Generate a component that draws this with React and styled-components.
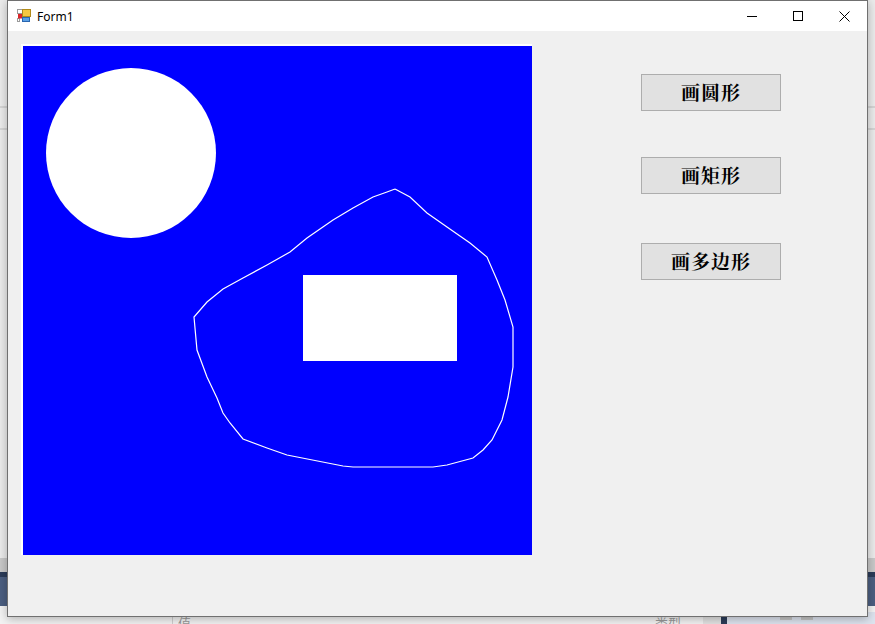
import React from 'react';
import styled, { createGlobalStyle } from 'styled-components';

const GlobalStyle = createGlobalStyle`
  html, body {
    margin: 0;
    padding: 0;
    background: #ebebeb;
  }
  body {
    font-family: "Noto Sans", "Liberation Sans", sans-serif;
  }
`;

const Desktop = styled.div`
  position: relative;
  width: 875px;
  height: 624px;
  overflow: hidden;
  background: #ebebeb;
`;

// the IDE that shows round the edges of the form window
const Backdrop = styled.div`
  height: 100%;
  display: flex;
  flex-direction: column;
`;

const Band = styled.div`
  flex: none;
  height: ${p => p.$h}px;
  margin-top: ${p => p.$gap || 0}px;
  background: ${p => p.$bg};
`;

const Filler = styled.div`
  flex: 1;
`;

const BottomBar = styled.div`
  flex: none;
  height: 18px;
  display: flex;
  align-items: flex-end;
  background: #f3f3f3;
  padding-left: 172px;
`;

const Divider = styled.div`
  width: 1px;
  height: 12px;
  background: #cfcfcf;
`;

const BackText = styled.span`
  margin-left: ${p => p.$gap}px;
  height: 10px;
  overflow: hidden;
  font-family: "Noto Sans CJK SC", sans-serif;
  font-size: 13px;
  line-height: 18px;
  color: #9a9a9a;
  white-space: nowrap;
`;

const Toolbar = styled.div`
  margin-left: 22px;
  height: 12px;
  flex: 1;
  display: flex;
  align-items: center;
  background: #dde3ee;
  border-left: 18px solid #e2e2e2;

  &::before {
    content: '';
    width: 6px;
    height: 12px;
    background: #2b3b58;
  }
`;

const ToolDash = styled.div`
  width: 12px;
  height: 3px;
  margin-left: ${p => p.$gap}px;
  background: #c4c4c4;
`;

const Window = styled.div`
  position: absolute;
  left: 7px;
  top: 0;
  z-index: 1;
  width: 861px;
  height: 617px;
  box-sizing: border-box;
  border: 1px solid #707070;
  background: #f0f0f0;
  display: flex;
  flex-direction: column;
  box-shadow: 0 2px 9px rgba(0, 0, 0, 0.28);
`;

const TitleBar = styled.div`
  height: 30px;
  flex: none;
  background: #ffffff;
  display: flex;
  align-items: center;
  padding-left: 9px;
`;

const Title = styled.span`
  margin-left: 6px;
  font-family: "Segoe UI", "Noto Sans", "Open Sans", sans-serif;
  font-size: 12px;
  color: #000;
  line-height: 1;
  padding-top: 1px;
`;

const Caption = styled.div`
  margin-left: auto;
  display: flex;
  height: 30px;
`;

const CaptionButton = styled.div`
  width: 46px;
  height: 30px;
  display: flex;
  align-items: center;
  justify-content: center;
`;

const Client = styled.div`
  flex: 1;
  display: flex;
  align-items: flex-start;
  padding: 13px 0 0 13px;
`;

const Canvas = styled.div`
  width: 509px;
  height: 509px;
  border-top: 2px solid #ffffff;
  border-left: 2px solid #ffffff;
  background: #0000ff;
  flex: none;

  svg {
    display: block;
  }
`;

const ButtonColumn = styled.div`
  display: flex;
  flex-direction: column;
  margin-left: 109px;
  padding-top: 30px;
`;

const FormButton = styled.button`
  width: 140px;
  height: 37px;
  margin-top: ${p => p.$gap || 0}px;
  padding: 0 0 3px;
  box-sizing: border-box;
  border: 1px solid #adadad;
  background: #e1e1e1;
  color: #000;
  font-family: "Noto Serif CJK SC", "Noto Sans CJK SC", serif;
  font-weight: 700;
  font-size: 19px;
  line-height: 1;
  letter-spacing: 1px;
  cursor: default;
`;

const FormIcon = () => (
  <svg width="14" height="14" viewBox="0 0 14 14">
    <rect x="0.5" y="0.5" width="5" height="4" fill="#fff" stroke="#9a9a9a" />
    <rect x="0.5" y="9.5" width="2" height="3" fill="#fff" stroke="#9a9a9a" />
    <rect x="5.5" y="0.5" width="8" height="7" fill="#f5c842" stroke="#b08a1a" />
    <rect x="1" y="5" width="4" height="4.5" fill="#d8262a" />
    <rect x="5.5" y="8.5" width="7" height="4" fill="#5aa0e6" stroke="#2a66b0" />
  </svg>
);

// freehand outline, in page pixels
const blob = [
  [395, 189], [410, 197], [427, 213], [447, 227], [470, 243], [487, 257],
  [497, 280], [505, 300], [513, 327], [513, 367], [508, 397], [502, 420],
  [492, 440], [483, 450], [473, 458], [447, 465], [433, 467], [353, 467],
  [343, 466], [287, 455], [267, 448], [243, 439], [230, 423], [223, 413],
  [217, 398], [207, 377], [197, 350], [194, 317], [207, 302], [223, 289],
  [243, 278], [267, 265], [290, 252], [307, 238], [333, 220], [353, 208],
  [373, 197], [387, 192], [395, 189],
];

function App() {
  return (
    <>
      <GlobalStyle />
      <Desktop>
        <Backdrop>
          <Band $gap={106} $h={2} $bg="#d4d4d4" />
          <Band $gap={20} $h={2} $bg="#d4d4d4" />
          <Filler />
          <Band $h={14} $bg="#c8c8c8" />
          <Band $h={5} $bg="#2b3b58" />
          <Band $h={29} $bg="#4b5e80" />
          <BottomBar>
            <Divider />
            <BackText $gap={5}>值</BackText>
            <BackText $gap={464}>类型</BackText>
            <Toolbar>
              <ToolDash $gap={53} />
              <ToolDash $gap={9} />
            </Toolbar>
          </BottomBar>
        </Backdrop>
        <Window>
          <TitleBar>
            <FormIcon />
            <Title>Form1</Title>
            <Caption>
              <CaptionButton>
                <svg width="10" height="10" viewBox="0 0 10 10">
                  <path d="M0 5.5H10" stroke="#000" strokeWidth="1" />
                </svg>
              </CaptionButton>
              <CaptionButton>
                <svg width="10" height="10" viewBox="0 0 10 10">
                  <rect x="0.5" y="0.5" width="9" height="9" fill="none" stroke="#000" />
                </svg>
              </CaptionButton>
              <CaptionButton>
                <svg width="11" height="11" viewBox="0 0 11 11">
                  <path d="M0.5 0.5L10.5 10.5M10.5 0.5L0.5 10.5" stroke="#000" strokeWidth="1" />
                </svg>
              </CaptionButton>
            </Caption>
          </TitleBar>
          <Client>
            <Canvas>
              <svg width="509" height="509" viewBox="23 46 509 509">
                <circle cx="131" cy="153" r="85" fill="#fff" />
                <rect x="303" y="275" width="154" height="86" fill="#fff" />
                <polyline
                  points={blob.map(p => p.join(',')).join(' ')}
                  fill="none"
                  stroke="#fff"
                  strokeWidth="1.2"
                />
              </svg>
            </Canvas>
            <ButtonColumn>
              <FormButton>画圆形</FormButton>
              <FormButton $gap={46}>画矩形</FormButton>
              <FormButton $gap={49}>画多边形</FormButton>
            </ButtonColumn>
          </Client>
        </Window>
      </Desktop>
    </>
  );
}

export default App;
